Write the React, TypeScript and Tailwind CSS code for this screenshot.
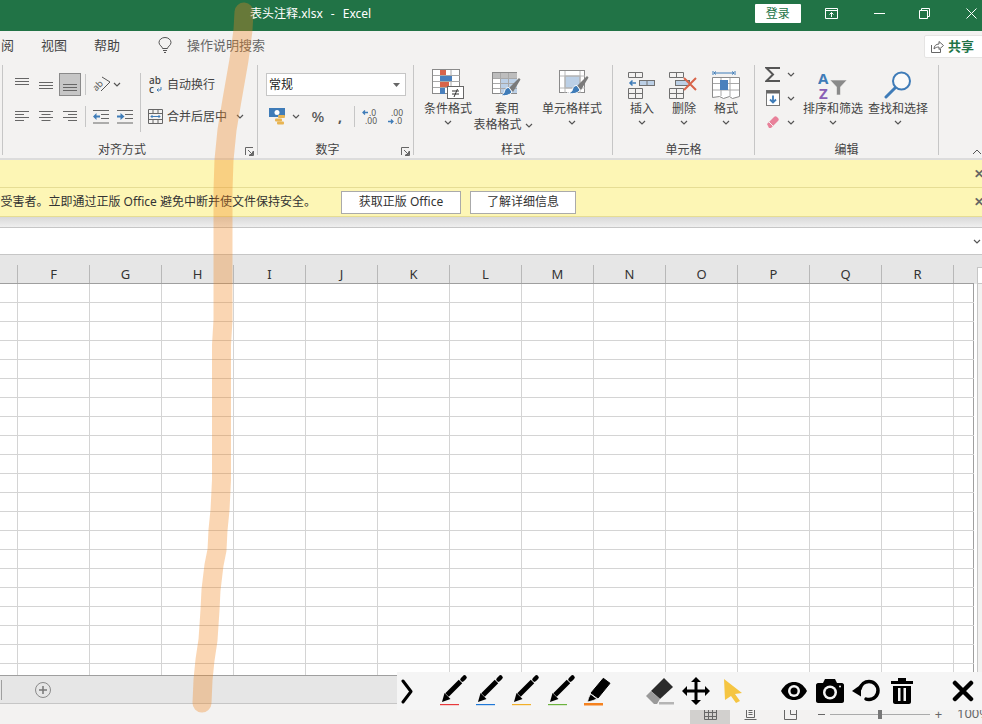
import React from "react";

const columns = ["", "F", "G", "H", "I", "J", "K", "L", "M", "N", "O", "P", "Q", "R", ""];
const rows = Array.from({ length: 21 }, (_, i) => i);

const colWidth = (i: number) =>
  i === 0 ? "w-[18px]" : i === 14 ? "w-[20px] border-r-[#9f9f9f]" : "w-[72px]";

const Chevron = ({ className = "" }: { className?: string }) => (
  <svg width="8" height="5" viewBox="0 0 8 5" className={className}>
    <path d="M1 1l3 3 3-3" fill="none" stroke="#555" strokeWidth="1.2" />
  </svg>
);

// align lines: x offsets for each of the text-align icons
const Lines = ({ y, widths, align }: { y: number[]; widths: number[]; align: "l" | "c" | "r" }) => (
  <svg width="14" height="14" viewBox="0 0 14 14">
    {y.map((yy, i) => {
      const x = align === "l" ? 0 : align === "c" ? (14 - widths[i]) / 2 : 14 - widths[i];
      return <rect key={i} x={x} y={yy} width={widths[i]} height="1" fill="#666" />;
    })}
  </svg>
);

const Launcher = () => (
  <svg width="9" height="9" viewBox="0 0 9 9">
    <path d="M0.5 8V0.5H8M8.5 4v4.5H4M3 3l4.5 4.5M7.5 4.5v3h-3" fill="none" stroke="#666" strokeWidth="1" />
  </svg>
);

const Indent = ({ flip }: { flip?: boolean }) => (
  <svg width="16" height="14" viewBox="0 0 16 14">
    <g fill="#666">
      <rect x="0" y="0" width="16" height="1" />
      <rect x="8" y="4" width="8" height="1" />
      <rect x="8" y="8" width="8" height="1" />
      <rect x="0" y="12.5" width="16" height="1" />
    </g>
    <path
      d={flip ? "M0 5.5h3.5V3L7.5 6.5 3.5 10V7.5H0z" : "M7 5.5H3.5V3L0 6.5 3.5 10V7.5H7z"}
      fill="#3f7cb8"
    />
  </svg>
);

const CondFormatIcon = () => (
  <svg width="32" height="30" viewBox="0 0 32 30">
    <rect x="0.5" y="0.5" width="27" height="24" fill="#fff" stroke="#8a8a8a" />
    <path d="M9 1v24M19 1v24M1 6.5h27M1 12.5h27M1 18.5h27" stroke="#a8a8a8" />
    <rect x="8" y="1" width="6" height="5" fill="#d8644a" />
    <rect x="8" y="7" width="12" height="5" fill="#4a80bd" />
    <rect x="8" y="13" width="9" height="5" fill="#d8644a" />
    <rect x="8" y="19" width="5" height="6" fill="#4a80bd" />
    <rect x="15.5" y="17.5" width="16" height="12" fill="#fff" stroke="#666" />
    <path d="M20 22h7M20 25h7M25.5 20l-3.5 8" stroke="#333" strokeWidth="1" fill="none" />
  </svg>
);

const Brush = ({ x, y }: { x: number; y: number }) => (
  <g transform={`translate(${x} ${y})`}>
    <path d="M10 10L20 0l1.5 1.5L14 14z" fill="#7a7a7a" />
    <path d="M10 9.5c-3 0-4 1.500-4.500 4C5 16 2.500 17 0 17c4 1.500 10.500 1 13-3z" fill="#3f7cb8" stroke="#fff" strokeWidth="1" />
  </g>
);

const TableFormatIcon = () => (
  <svg width="30" height="30" viewBox="0 0 30 30">
    <rect x="0.5" y="2.500" width="24" height="21" fill="#fff" stroke="#8a8a8a" />
    <rect x="1" y="3" width="24" height="5" fill="#bdbdbd" />
    <rect x="9" y="8" width="16" height="15" fill="#bcd0e6" />
    <path d="M8.500 3v21M16.500 3v21M1 8.500h24M1 13.500h24M1 18.500h24" stroke="#a8a8a8" />
    <Brush x={7} y={8} />
  </svg>
);

const CellStyleIcon = () => (
  <svg width="30" height="30" viewBox="0 0 30 30">
    <rect x="0.5" y="0.5" width="25" height="22" fill="#fff" stroke="#8a8a8a" />
    <rect x="6" y="6" width="15" height="12" fill="#bcd0e6" stroke="#a8a8a8" />
    <path d="M6 1v22M21 1v22M1 6h25M1 18h25" stroke="#b8b8b8" />
    <Brush x={8} y={6} />
  </svg>
);

const InsertIcon = () => (
  <svg width="28" height="28" viewBox="0 0 28 28" fill="none">
    <path d="M0.500 0.500h14v5h-14zM7.500 0.500v5M0.500 16.500h14v10h-14zM0.500 21.500h14M7.500 16.500v10" stroke="#707070" />
    <rect x="11.500" y="8.500" width="15" height="5" stroke="#707070" fill="#bcd0e6" />
    <path d="M19 8.500v5" stroke="#707070" />
    <path d="M8 11H2m2.500-2.500L2 11l2.500 2.500" stroke="#3f7cb8" strokeWidth="1.500" />
  </svg>
);

const DeleteIcon = () => (
  <svg width="30" height="28" viewBox="0 0 30 28" fill="none">
    <path d="M0.500 0.500h14v5h-14zM7.500 0.500v5M0.500 16.500h14v10h-14zM0.500 21.500h14M7.500 16.500v10" stroke="#707070" />
    <rect x="6.500" y="8.500" width="14" height="5" stroke="#707070" fill="#bcd0e6" />
    <path d="M15 6l12 12M27 6L15 18" stroke="#d8644a" strokeWidth="2" />
  </svg>
);

const FormatIcon = () => (
  <svg width="28" height="30" viewBox="0 0 28 30" fill="none">
    <path d="M1 1v4M23 1v4M2 3h20M2 3l2-1.500M2 3l2 1.500M22 3l-2-1.500M22 3l-2 1.500" stroke="#3f7cb8" />
    <path d="M0.500 7.500h27v19l-7 2-3-2-6 2-4-2-7 1z" fill="#fff" stroke="#8a8a8a" />
    <path d="M9 8v18M18 8v18M1 13.500h26M1 20h26" stroke="#a8a8a8" />
    <rect x="8" y="10" width="8" height="10" fill="#4a80bd" />
  </svg>
);

const Pen = ({ color, thick }: { color: string; thick?: boolean }) => (
  <svg width="36" height="36" viewBox="0 0 36 36">
    {thick ? (
      <>
        <path d="M24.300 5.300L31 10.300 19 25l-7-5z" fill="#000" stroke="#000" strokeWidth="1" strokeLinejoin="round" />
        <path d="M11.500 21l6.500 5-4 1.500-5.500 1.500 1-4z" fill="#000" stroke="#f5f5f5" strokeWidth="0.800" />
        <rect x="5" y="30" width="19" height="2.500" fill="#f5821f" />
      </>
    ) : (
      <>
        <path d="M12 22L25.500 8.500" stroke="#000" strokeWidth="5" />
        <path d="M27.500 6.500L29.500 4.500" stroke="#000" strokeWidth="4.500" strokeLinecap="round" />
        <path d="M9.500 20l6 6-8.500 3z" fill="#000" />
        <rect x="5" y="31" width="19" height="1.200" fill={color} />
      </>
    )}
  </svg>
);

const ToolBtn = ({ children }: { children: React.ReactNode }) => (
  <div className="flex h-[38px] w-9 shrink-0 items-center justify-center">{children}</div>
);

export default function App() {
  return (
    <div className="relative flex h-[724px] w-[982px] flex-col overflow-hidden bg-[#f3f2f1] font-['Noto_Sans','Noto_Sans_CJK_SC',sans-serif] text-[12px] text-[#444]">
      {/* Title bar */}
      <div className="flex h-[31px] shrink-0 items-center bg-[#217346] pb-[4px] text-white">
        <span className="ml-[250px] shrink-0 whitespace-nowrap leading-none">表头注释.xlsx</span>
        <span className="ml-[8px] w-[4px] shrink-0 leading-none">-</span>
        <span className="ml-[8px] w-[29px] shrink-0 leading-none">Excel</span>
        <button className="ml-[383px] h-[19px] w-[46px] shrink-0 rounded-[1px] bg-white text-[12px] leading-none text-[#217346]">登录</button>
        <svg width="13" height="11" viewBox="0 0 13 11" className="ml-[24px] shrink-0" fill="none" stroke="#fff">
          <path d="M0.500 0.500h12v10h-12zM1 2.500h11M6.500 9V4.500M4.500 6.500l2-2 2 2" />
        </svg>
        <div className="ml-[36px] h-px w-[11px] shrink-0 bg-white" />
        <svg width="11" height="11" viewBox="0 0 11 11" className="ml-[34px] shrink-0" fill="none" stroke="#fff">
          <path d="M0.500 2.500h8v8h-8zM2.500 2.500v-2h8v8h-2" />
        </svg>
        <svg width="11" height="11" viewBox="0 0 11 11" className="ml-[36px] shrink-0" fill="none" stroke="#fff">
          <path d="M0.500 0.500l10 10M10.500 0.500l-10 10" />
        </svg>
      </div>

      {/* Tab row */}
      <div className="flex h-[31px] shrink-0 items-center whitespace-nowrap pb-[2px] text-[13px] text-[#444]">
        <div className="flex w-[14px] shrink-0 justify-end overflow-hidden"><span className="shrink-0">阅</span></div>
        <span className="ml-[27px] shrink-0">视图</span>
        <span className="ml-[27px] shrink-0">帮助</span>
        <svg width="14" height="17" viewBox="0 0 14 17" className="ml-[38px] shrink-0" fill="none" stroke="#555">
          <path d="M4.500 11.500c0-2-3.500-3-3.500-6a6 5 0 0 1 12 0c0 3-3.500 4-3.500 6zM5 13.500h4M6 15.500h2" />
        </svg>
        <span className="ml-[15px] shrink-0 text-[#666]">操作说明搜索</span>
        <div className="ml-[659px] mt-[2px] flex h-[23px] w-[60px] shrink-0 items-center rounded-[2px] border border-[#e5e4e3] bg-white pl-[6px] font-bold text-[#217346]">
          <svg width="13" height="13" viewBox="0 0 13 13" fill="none" stroke="#666">
            <path d="M0.500 5v7.500h9V9" />
            <path d="M3 9c0-3 2-5 5-5V1.500l4.500 4-4.500 4V7c-2 0-3.500 .5-5 2z" />
          </svg>
          <span className="ml-[4px]">共享</span>
        </div>
      </div>

      {/* Ribbon */}
      <div className="flex h-[98px] shrink-0 border-b-[2px] border-[#dcdcdc] pt-[3px]">
        <div className="mb-[3px] w-[3px] shrink-0 border-r border-[#c6c6c6]" />

        {/* Alignment */}
        <div className="mb-[3px] flex w-[255px] shrink-0 flex-col border-r border-[#c6c6c6]">
          <div className="flex flex-1 pt-[8px]">
            <div className="flex h-[59px] w-[138px] shrink-0 flex-col gap-[9px] border-r border-[#c6c6c6] pl-[12px]">
              <div className="flex h-[23px] items-center">
                <Lines y={[0, 3, 6]} widths={[14, 14, 14]} align="l" />
                <div className="ml-[10px]"><Lines y={[4, 7, 10]} widths={[14, 14, 14]} align="l" /></div>
                <div className="ml-[6px] flex h-[23px] w-[22px] items-center justify-center border border-[#8a8a8a] bg-[#c6c6c6] pt-[6px]">
                  <Lines y={[3, 6, 9]} widths={[14, 14, 14]} align="l" />
                </div>
                <div className="ml-[4px] h-[21px] w-px bg-[#c6c6c6]" />
                <svg width="18" height="18" viewBox="0 0 18 18" className="ml-[7px]" fill="none">
                  <text x="1" y="14" fontSize="9" fill="#555" transform="rotate(-45 4 12)">ab</text>
                  <path d="M9 1l8 5-9 9" stroke="#555" />
                </svg>
                <Chevron className="ml-[2px]" />
              </div>
              <div className="flex h-[23px] items-center">
                <Lines y={[1, 4, 7, 10]} widths={[14, 9, 14, 9]} align="l" />
                <div className="ml-[10px]"><Lines y={[1, 4, 7, 10]} widths={[14, 9, 14, 9]} align="c" /></div>
                <div className="ml-[10px]"><Lines y={[1, 4, 7, 10]} widths={[14, 9, 14, 9]} align="r" /></div>
                <div className="ml-[8px] h-[21px] w-px bg-[#c6c6c6]" />
                <div className="ml-[7px]"><Indent /></div>
                <div className="ml-[8px]"><Indent flip /></div>
              </div>
            </div>
            <div className="flex h-[59px] flex-col gap-[9px]">
              <div className="flex h-[23px] items-center pl-[8px]">
                <svg width="14" height="18" viewBox="0 0 14 18">
                  <text x="0" y="8" fontSize="10" fontWeight="500" fill="#444">ab</text>
                  <text x="0" y="17" fontSize="10" fontWeight="500" fill="#444">c</text>
                  <path d="M12 11v3H8m1.500-1.500L8 14l1.500 1.500" fill="none" stroke="#3f7cb8" />
                </svg>
                <span className="ml-[4px]">自动换行</span>
              </div>
              <div className="flex h-[23px] items-center pl-[7px]">
                <svg width="15" height="15" viewBox="0 0 15 15" fill="none" stroke="#666">
                  <path d="M0.500 0.500h14v14h-14zM1 4.500h13M1 10.500h13M5 1v3M10 1v3M5 11v3M10 11v3" />
                  <path d="M3 7.500h9M4.500 6L3 7.500 4.500 9M10.500 6L12 7.500 10.500 9" stroke="#3f7cb8" />
                </svg>
                <span className="ml-[4px]">合并后居中</span>
                <Chevron className="ml-[9px]" />
              </div>
            </div>
          </div>
          <div className="mb-[-3px] flex h-[16px] shrink-0 items-center">
            <span className="flex-1 text-center">对齐方式</span>
            <div className="flex w-[16px] justify-center pt-[2px]"><Launcher /></div>
          </div>
        </div>

        {/* Number */}
        <div className="mb-[3px] flex w-[156px] shrink-0 flex-col border-r border-[#c6c6c6]">
          <div className="flex flex-1 flex-col gap-[9px] pt-[8px]">
            <div className="ml-[8px] flex h-[23px] w-[140px] items-center justify-between border border-[#c6c6c6] bg-white pl-[2px] pr-[5px] text-[#222]">
              <span>常规</span>
              <svg width="7" height="4" viewBox="0 0 7 4"><path d="M0 0h7L3.500 4z" fill="#666" /></svg>
            </div>
            <div className="flex h-[23px] items-center pl-[11px]">
              <svg width="17" height="17" viewBox="0 0 17 17">
                <rect x="0" y="0" width="16" height="9" fill="#3f7cb8" />
                <circle cx="8" cy="4.500" r="2.500" fill="#fff" />
                <rect x="9" y="7" width="7" height="3" rx="1" fill="#e8b452" />
                <rect x="6" y="10.500" width="7" height="3" rx="1" fill="#e8b452" />
                <rect x="8" y="13.500" width="7" height="3" rx="1" fill="#e8b452" />
              </svg>
              <Chevron className="ml-[6px]" />
              <span className="ml-[9px] w-[18px] text-center text-[15px] font-medium leading-none text-[#555]">%</span>
              <span className="ml-[11px] text-[14px] font-bold leading-none text-[#555]">,</span>
              <div className="ml-[12px] h-[21px] w-px bg-[#c6c6c6]" />
              <svg width="17" height="16" viewBox="0 0 17 16" className="ml-[7px]">
                <text x="7" y="7" fontSize="8.500" fill="#555">.0</text>
                <text x="3" y="15" fontSize="8.500" fill="#555">.00</text>
                <path d="M6 3.500H1m2-2l-2 2 2 2" fill="none" stroke="#3f7cb8" strokeWidth="1.300" />
              </svg>
              <svg width="17" height="16" viewBox="0 0 17 16" className="ml-[8px]">
                <text x="4" y="7" fontSize="8.500" fill="#555">.00</text>
                <text x="8" y="15" fontSize="8.500" fill="#555">.0</text>
                <path d="M1 12.500h5m-2-2l2 2-2 2" fill="none" stroke="#3f7cb8" strokeWidth="1.300" />
              </svg>
            </div>
          </div>
          <div className="mb-[-3px] flex h-[16px] shrink-0 items-center">
            <span className="flex-1 text-center">数字</span>
            <div className="flex w-[16px] justify-center pt-[2px]"><Launcher /></div>
          </div>
        </div>

        {/* Styles */}
        <div className="mb-[3px] flex w-[199px] shrink-0 flex-col border-r border-[#c6c6c6]">
          <div className="ml-[4px] flex flex-1">
            <div className="flex w-[60px] flex-col items-center">
              <div className="flex h-[36px] items-end pb-[2px]"><CondFormatIcon /></div>
              <span className="h-[16px] leading-[16px]">条件格式</span>
              <Chevron className="mt-[3px]" />
            </div>
            <div className="flex w-[58px] flex-col items-center">
              <div className="flex h-[36px] items-end pb-[1px]"><TableFormatIcon /></div>
              <span className="h-[16px] leading-[16px]">套用</span>
              <div className="flex h-[16px] items-center">
                <span className="ml-[-8px]">表格格式</span>
                <Chevron className="ml-[3px]" />
              </div>
            </div>
            <div className="flex w-[72px] flex-col items-center">
              <div className="flex h-[36px] items-end pb-[1px] pl-[4px]"><CellStyleIcon /></div>
              <span className="h-[16px] leading-[16px]">单元格样式</span>
              <Chevron className="mt-[3px]" />
            </div>
          </div>
          <div className="mb-[-3px] h-[16px] shrink-0 text-center leading-[16px]">样式</div>
        </div>

        {/* Cells */}
        <div className="mb-[3px] flex w-[142px] shrink-0 flex-col border-r border-[#c6c6c6]">
          <div className="ml-[8px] flex flex-1">
            {[
              { label: "插入", icon: <InsertIcon /> },
              { label: "删除", icon: <DeleteIcon /> },
              { label: "格式", icon: <FormatIcon /> },
            ].map((c) => (
              <div key={c.label} className="flex w-[42px] flex-col items-center">
                <div className="flex h-[36px] items-end pb-[1px]">{c.icon}</div>
                <span className="h-[16px] leading-[16px]">{c.label}</span>
                <Chevron className="mt-[3px]" />
              </div>
            ))}
          </div>
          <div className="mb-[-3px] h-[16px] shrink-0 text-center leading-[16px]">单元格</div>
        </div>

        {/* Editing */}
        <div className="mb-[3px] flex w-[184px] shrink-0 flex-col border-r border-[#c6c6c6]">
          <div className="flex flex-1">
            <div className="ml-[10px] flex w-[38px] flex-col gap-[6px]">
              <div className="flex h-[18px] items-center">
                <svg width="16" height="15" viewBox="0 0 16 15"><path d="M15 1H1.500L8 7.500 1.500 14H15" fill="none" stroke="#555" strokeWidth="2" /></svg>
                <Chevron className="ml-[6px]" />
              </div>
              <div className="flex h-[18px] items-center">
                <svg width="16" height="16" viewBox="0 0 16 16" fill="none">
                  <rect x="1.500" y="0.500" width="13" height="15" fill="#fff" stroke="#777" />
                  <rect x="1.500" y="0.500" width="13" height="3" fill="#666" />
                  <path d="M8 5.500v7M5 9.500l3 3 3-3" stroke="#3f7cb8" strokeWidth="1.800" />
                </svg>
                <Chevron className="ml-[6px]" />
              </div>
              <div className="flex h-[18px] items-center">
                <svg width="16" height="14" viewBox="0 0 16 14"><path d="M2 9l7-7c1-1 2-1 3 0l1 1c1 1 1 2 0 3l-7 7H4z" fill="#e8819a" /><path d="M4 7l4 4" stroke="#f3f2f1" /></svg>
                <Chevron className="ml-[6px]" />
              </div>
            </div>
            <div className="flex w-[60px] flex-col items-center">
              <div className="flex h-[36px] items-end pb-[1px]">
                <svg width="30" height="28" viewBox="0 0 30 28">
                  <text x="0" y="12" fontSize="15" fontWeight="bold" fill="#3f7cb8">A</text>
                  <text x="1" y="27" fontSize="15" fontWeight="bold" fill="#8a5fb5">Z</text>
                  <path d="M12 8h17l-6.500 7v8h-4v-8z" fill="#8a8a8a" stroke="#f3f2f1" strokeWidth="0.600" />
                </svg>
              </div>
              <span className="h-[16px] leading-[16px]">排序和筛选</span>
              <Chevron className="mt-[3px]" />
            </div>
            <div className="ml-[5px] flex w-[60px] flex-col items-center">
              <div className="flex h-[36px] items-end pb-[1px]">
                <svg width="28" height="29" viewBox="0 0 28 29" fill="none">
                  <circle cx="17.500" cy="10" r="8.500" stroke="#3f7cb8" strokeWidth="2" fill="#fff" fillOpacity="0.600" />
                  <path d="M11 17L2 26" stroke="#3f7cb8" strokeWidth="3" strokeLinecap="round" />
                </svg>
              </div>
              <span className="h-[16px] leading-[16px]">查找和选择</span>
              <Chevron className="mt-[3px]" />
            </div>
          </div>
          <div className="mb-[-3px] h-[16px] shrink-0 text-center leading-[16px]">编辑</div>
        </div>

        <div className="flex flex-1 items-end justify-end pb-[3px] pr-[1px]">
          <svg width="9" height="6" viewBox="0 0 9 6"><path d="M1 5l4-4 4 4" fill="none" stroke="#555" /></svg>
        </div>
      </div>

      {/* Message bars */}
      <div className="flex h-[28px] shrink-0 items-center justify-end border-b border-[#e6dd94] bg-[#fdf6b5]">
        <span className="mr-[-2px] text-[12px] font-bold leading-none text-[#666]">✕</span>
      </div>
      <div className="flex h-[29px] shrink-0 items-center border-b border-[#e6dd94] bg-[#fdf6b5] text-[#333]">
        <div className="flex w-[316px] shrink-0 justify-end overflow-hidden whitespace-nowrap">
          <span className="shrink-0">的受害者。立即通过正版 Office 避免中断并使文件保持安全。</span>
        </div>
        <button className="ml-[25px] h-[23px] w-[120px] border border-[#aaa] bg-white text-[12px] text-[#333]">获取正版 Office</button>
        <button className="ml-[9px] h-[23px] w-[106px] border border-[#aaa] bg-white text-[12px] text-[#333]">了解详细信息</button>
        <span className="ml-auto mr-[-2px] text-[12px] font-bold leading-none text-[#666]">✕</span>
      </div>

      {/* Gap and formula bar */}
      <div className="h-[11px] shrink-0 border-b border-[#c6c6c6] bg-gradient-to-b from-[#d9d9d9] to-[#efefef]" />
      <div className="flex h-[27px] shrink-0 items-center justify-end border-b border-[#c6c6c6] bg-white pr-[1px]">
        <Chevron />
      </div>

      {/* Column headers */}
      <div className="flex h-[29px] shrink-0 bg-[#e6e6e6]">
        <div className="flex w-[974px] shrink-0 items-end border-b border-[#9f9f9f]">
          {columns.slice(0, 15).map((c, i) => (
            <div
              key={i}
              className={`flex h-[18px] shrink-0 items-center justify-center border-r border-[#b8b8b8] text-[13px] leading-none text-[#333] ${i === 14 ? "w-[20px] border-r-0" : colWidth(i)}`}
            >
              {c}
            </div>
          ))}
        </div>
        <div className="ml-[3px] mt-[12px] flex-1 border border-r-0 border-[#c6c6c6] bg-white" />
      </div>

      {/* Grid */}
      <div className="flex min-h-0 flex-1 bg-white">
        <div className="w-[974px] shrink-0 overflow-hidden border-r-0">
          {rows.map((r) => (
            <div key={r} className="flex h-[19px] border-b border-[#d4d4d4]">
              {columns.map((_, i) => (
                <div key={i} className={`h-full shrink-0 border-r border-[#d4d4d4] ${colWidth(i)}`} />
              ))}
            </div>
          ))}
        </div>
        <div className="ml-[3px] flex-1 border-l border-[#c6c6c6] bg-[#f3f2f1]" />
      </div>

      {/* Sheet tabs */}
      <div className="flex h-[29px] shrink-0 items-center border-y border-t-[#9f9f9f] border-b-[#c6c6c6] bg-[#e6e6e6]">
        <div className="ml-px h-[20px] w-px bg-[#9f9f9f]" />
        <svg width="16" height="16" viewBox="0 0 16 16" className="ml-[33px]" fill="none">
          <circle cx="8" cy="8" r="7.500" stroke="#8a8a8a" />
          <path d="M8 4v8M4 8h8" stroke="#777" strokeWidth="1.500" />
        </svg>
      </div>

      {/* Status bar */}
      <div className="flex h-[20px] shrink-0 items-center text-[#666]">
        <div className="ml-[690px] flex h-full w-[40px] shrink-0 items-center justify-center bg-[#d2d0ce]">
          <svg width="13" height="11" viewBox="0 0 13 11" fill="none" stroke="#666"><path d="M0.500 0.500h12v10h-12zM4.500 1v9M8.500 1v9M1 3.500h11M1 7.500h11" /></svg>
        </div>
        <svg width="13" height="12" viewBox="0 0 13 12" className="ml-[14px] shrink-0" fill="none" stroke="#666"><path d="M2.500 0.500v9h8v-9M0.500 11.500h12M4.500 2.500h4M4.500 4.500h4M4.500 6.500h4" /></svg>
        <svg width="13" height="12" viewBox="0 0 13 12" className="ml-[27px] shrink-0" fill="none" stroke="#666"><path d="M0.500 0.500v11h12v-11M6.500 0.500v6h6" /></svg>
        <div className="ml-[21px] h-px w-[7px] shrink-0 bg-[#666]" />
        <div className="ml-[5px] flex h-[10px] w-[100px] shrink-0 items-center justify-center bg-[linear-gradient(#aaa,#aaa)] bg-[length:100%_1px] bg-center bg-no-repeat">
          <div className="h-[10px] w-[4px] bg-[#777]" />
        </div>
        <span className="ml-[4px] w-[9px] shrink-0 text-center text-[13px] leading-none">+</span>
        <span className="ml-[14px] shrink-0 whitespace-nowrap text-[13px]">100%</span>
      </div>

      {/* Ink stroke drawn over the window */}
      <svg width="982" height="724" viewBox="0 0 982 724" className="pointer-events-none absolute left-0 top-0">
        <path
          d="M244 12L243 30L239 60L232 100L227 130L224 160L223 190L223 320L221.500 345L221.500 480L220 510L218 530L217 550L214 565L211 590L210 610L208 640L205 660L203 680L202 703"
          fill="none"
          stroke="#f08821"
          strokeOpacity="0.34"
          strokeWidth="19"
          strokeLinecap="round"
          strokeLinejoin="round"
        />
      </svg>

      {/* Floating pen toolbar */}
      <div className="absolute left-[397px] top-[672px] flex h-[38px] w-[585px] items-center bg-[#f5f5f5]">
        <div className="flex h-[38px] w-[20px] shrink-0 items-center justify-center">
          <svg width="12" height="25" viewBox="0 0 12 25"><path d="M2 2l8 10.500-8 10.500" fill="none" stroke="#000" strokeWidth="3" strokeLinecap="round" strokeLinejoin="round" /></svg>
        </div>
        <div className="ml-[18px] flex">
          <ToolBtn><Pen color="#e8393c" /></ToolBtn>
          <ToolBtn><Pen color="#1f78d8" /></ToolBtn>
          <ToolBtn><Pen color="#f2b02a" /></ToolBtn>
          <ToolBtn><Pen color="#6cb33f" /></ToolBtn>
          <ToolBtn><Pen color="#f5821f" thick /></ToolBtn>
        </div>
        <div className="ml-[27px] flex">
          <ToolBtn>
            <svg width="30" height="30" viewBox="0 0 30 30">
              <path d="M6 15L19 2l9 9-13 12z" fill="#2b2b2b" />
              <path d="M1 20l5-5 9 8-3 5H9z" fill="#9a9a9a" />
              <rect x="14" y="26" width="15" height="2.500" fill="#b5b5b5" />
            </svg>
          </ToolBtn>
          <ToolBtn>
            <svg width="28" height="28" viewBox="0 0 28 28">
              <path d="M14 3v22M3 14h22" stroke="#000" strokeWidth="3" />
              <path d="M14 0l5 5H9zM14 28l-5-5h10zM0 14l5-5v10zM28 14l-5 5V9z" fill="#000" />
            </svg>
          </ToolBtn>
          <ToolBtn>
            <svg width="24" height="26" viewBox="0 0 24 26">
              <path d="M4 1l18 14-7 1 5 7-4 2-5-7-6 4z" fill="#f5c542" />
            </svg>
          </ToolBtn>
        </div>
        <div className="ml-[26px] flex">
          <ToolBtn>
            <svg width="28" height="20" viewBox="0 0 28 20">
              <path d="M1 10C5 3 9 1 14 1s9 2 13 9c-4 7-8 9-13 9S5 17 1 10z" fill="#000" />
              <circle cx="14" cy="10" r="6" fill="#f5f5f5" />
              <circle cx="14" cy="10" r="3.500" fill="#000" />
            </svg>
          </ToolBtn>
          <ToolBtn>
            <svg width="28" height="24" viewBox="0 0 28 24">
              <path d="M9 0h10l2 4h5c1 0 2 1 2 2v16c0 1-1 2-2 2H2c-1 0-2-1-2-2V6c0-1 1-2 2-2h5z" fill="#000" />
              <circle cx="14" cy="13.500" r="7" fill="#f5f5f5" />
              <circle cx="14" cy="13.500" r="4.500" fill="#000" />
              <circle cx="24" cy="7.500" r="1" fill="#f5f5f5" />
            </svg>
          </ToolBtn>
          <ToolBtn>
            <svg width="28" height="24" viewBox="0 0 28 24">
              <path d="M8 10C9 5 13 2.500 17 2.500a9 9 0 0 1 0 18c-1 0-2 0-3-.5" fill="none" stroke="#000" strokeWidth="3.500" strokeLinecap="round" />
              <path d="M0 12l9-6.500v12z" fill="#000" />
            </svg>
          </ToolBtn>
          <ToolBtn>
            <svg width="22" height="26" viewBox="0 0 22 26">
              <rect x="0" y="3" width="22" height="3" fill="#000" />
              <rect x="7" y="0" width="8" height="3" fill="#000" />
              <path d="M2 8h18v16c0 1-1 2-2 2H4c-1 0-2-1-2-2z" fill="#000" />
              <rect x="7" y="10" width="2.500" height="13" fill="#f5f5f5" />
              <rect x="12.500" y="10" width="2.500" height="13" fill="#f5f5f5" />
            </svg>
          </ToolBtn>
        </div>
        <div className="ml-[25px]">
          <ToolBtn>
            <svg width="22" height="22" viewBox="0 0 22 22"><path d="M3 3l16 16M19 3L3 19" stroke="#000" strokeWidth="4.500" strokeLinecap="round" /></svg>
          </ToolBtn>
        </div>
      </div>
    </div>
  );
}
